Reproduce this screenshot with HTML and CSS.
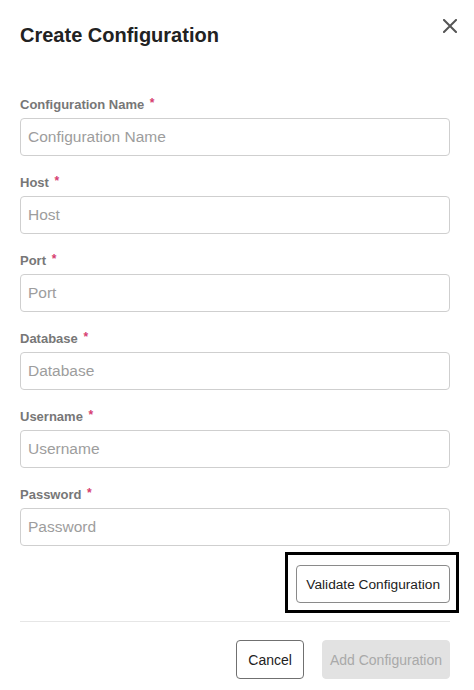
FILE: index.html
```html
<!DOCTYPE html>
<html lang="en">
<head>
  <meta charset="UTF-8">
  <meta name="viewport" content="width=device-width, initial-scale=1.0">
  <title>Create Configuration</title>
  <link rel="stylesheet" href="styles.css">
</head>
<body>
  <div class="modal">
    <div class="modal-header">
      <h1>Create Configuration</h1>
      <button class="btn-close" aria-label="Close">
        <svg width="14" height="14" viewBox="0 0 14 14">
          <path d="M1 1 L13 13 M13 1 L1 13" stroke="#555" stroke-width="2" fill="none" stroke-linecap="square"/>
        </svg>
      </button>
    </div>

    <form class="config-form">
      <div class="form-group">
        <label for="config-name">Configuration Name <span class="req">*</span></label>
        <input type="text" id="config-name" placeholder="Configuration Name">
      </div>
      <div class="form-group">
        <label for="host">Host <span class="req">*</span></label>
        <input type="text" id="host" placeholder="Host">
      </div>
      <div class="form-group">
        <label for="port">Port <span class="req">*</span></label>
        <input type="text" id="port" placeholder="Port">
      </div>
      <div class="form-group">
        <label for="database">Database <span class="req">*</span></label>
        <input type="text" id="database" placeholder="Database">
      </div>
      <div class="form-group">
        <label for="username">Username <span class="req">*</span></label>
        <input type="text" id="username" placeholder="Username">
      </div>
      <div class="form-group form-group-last">
        <label for="password">Password <span class="req">*</span></label>
        <input type="password" id="password" placeholder="Password">
      </div>

      <div class="validate-row">
        <div class="validate-box">
          <button type="button" class="btn btn-outline btn-validate">Validate Configuration</button>
        </div>
      </div>
    </form>

    <div class="modal-footer">
      <button type="button" class="btn btn-outline btn-cancel">Cancel</button>
      <button type="button" class="btn btn-disabled" disabled>Add Configuration</button>
    </div>
  </div>
</body>
</html>
```

FILE: styles.css
```css
/* General Styles */
* {
  margin: 0;
  padding: 0;
  box-sizing: border-box;
}

body {
  font-family: 'Liberation Sans', Arial, Helvetica, sans-serif;
  background-color: #fff;
  color: #222;
}

.modal {
  padding: 0 24px 0 20px;
}

/* Header */
.modal-header {
  display: flex;
  justify-content: space-between;
  align-items: flex-start;
  padding-top: 19px;
  margin-right: -7px;
}

.modal-header h1 {
  margin-top: 4px;
  font-size: 20px;
  line-height: 24px;
  font-weight: 700;
  color: #222;
}

.btn-close {
  width: 14px;
  height: 14px;
  border: none;
  background: none;
  cursor: pointer;
  display: block;
}

.btn-close svg {
  display: block;
}

/* Form */
.config-form {
  margin-top: 50px;
}

.form-group {
  margin-bottom: 19px;
}

.form-group-last {
  margin-bottom: 0;
}

.form-group label {
  display: block;
  font-size: 13px;
  line-height: 16px;
  font-weight: 700;
  color: #777;
  margin-bottom: 5px;
}

.req {
  color: #d6406f;
  font-size: 12px;
  position: relative;
  top: -2px;
  margin-left: 2px;
}

.form-group input {
  width: 100%;
  height: 38px;
  padding: 0 7px;
  font-family: inherit;
  font-size: 15.5px;
  color: #333;
  border: 1px solid #cfcfcf;
  border-radius: 4px;
  outline: none;
}

.form-group input::placeholder {
  color: #9d9d9d;
}

/* Validate */
.validate-row {
  display: flex;
  justify-content: flex-end;
  margin-top: 6px;
  margin-right: -9px;
}

.validate-box {
  border: 3px solid #000;
  padding: 10px 6px 7px 8px;
}

/* Buttons */
.btn {
  font-family: inherit;
  font-size: 14px;
  border-radius: 4px;
  cursor: pointer;
}

.btn-outline {
  background: #fff;
  color: #222;
  border: 1px solid #8a8a8a;
}

.btn-validate {
  height: 38px;
  padding: 0 9px;
  font-size: 13.7px;
}

.btn-cancel {
  height: 39px;
  padding: 0 11px;
  border-color: #707070;
}

.btn-disabled {
  height: 39px;
  padding: 0 7px;
  background: #e2e2e2;
  color: #a9a9a9;
  border: 1px solid #e2e2e2;
  cursor: default;
}

/* Footer */
.modal-footer {
  display: flex;
  justify-content: flex-end;
  gap: 18px;
  margin-top: 8px;
  padding-top: 18px;
  border-top: 1px solid #e6e6e6;
}
```
